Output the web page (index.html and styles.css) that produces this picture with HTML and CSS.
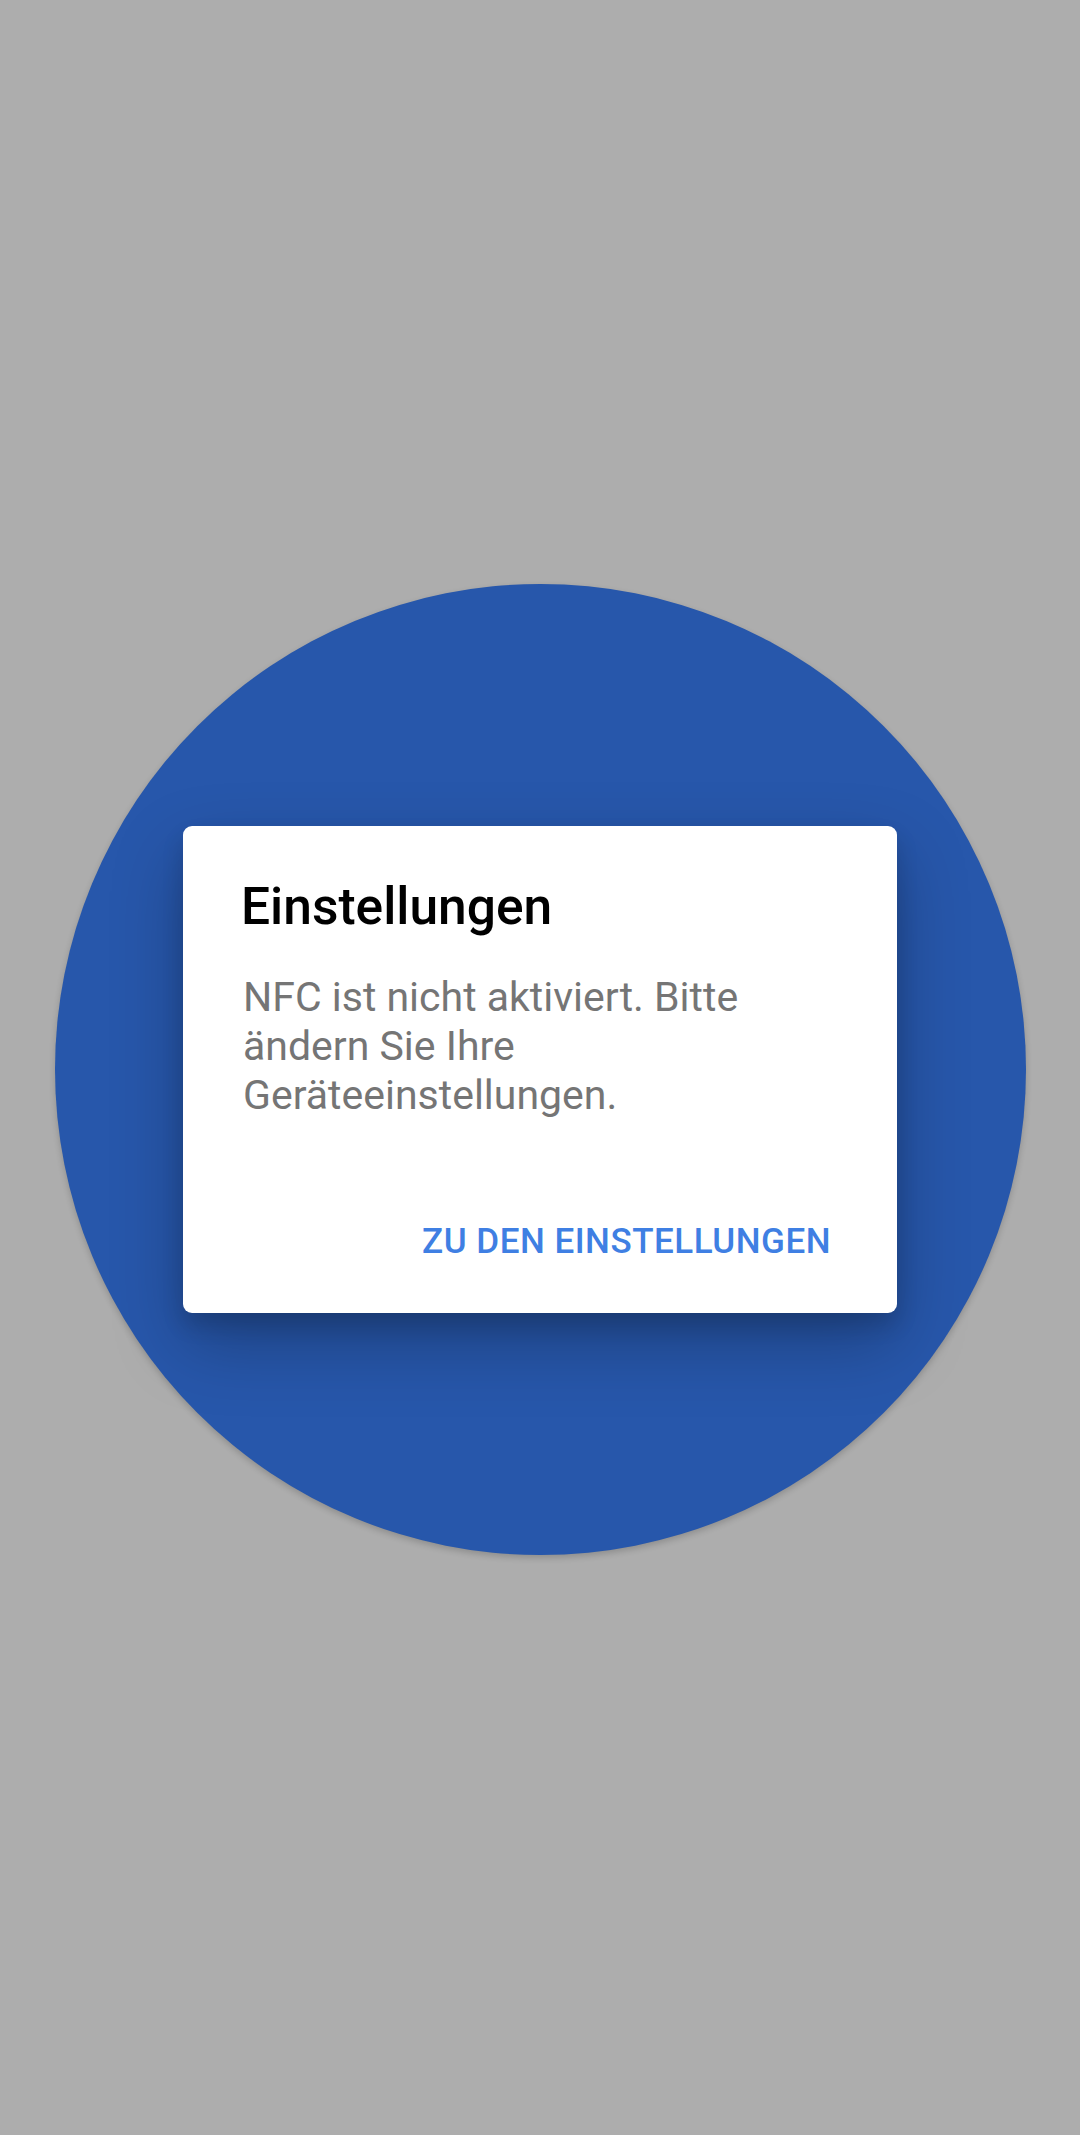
FILE: index.html
```html
<!DOCTYPE html>
<html lang="de">
<head>
<meta charset="utf-8">
<title>Einstellungen</title>
<link rel="stylesheet" href="styles.css">
</head>
<body>
<div class="screen">
  <div class="circle"></div>
  <div class="dialog">
    <h1 class="title">Einstellungen</h1>
    <p class="message">NFC ist nicht aktiviert. Bitte ändern Sie Ihre Geräteeinstellungen.</p>
    <div class="actions">
      <span class="action">ZU DEN EINSTELLUNGEN</span>
    </div>
  </div>
</div>
</body>
</html>
```
FILE: styles.css
```css
html, body {
  margin: 0;
  padding: 0;
  background: #adadad;
}
.screen {
  width: 1080px;
  height: 2135px;
  display: grid;
  place-items: center;
  padding-top: 3px;
  box-sizing: border-box;
  font-family: Roboto, "Noto Sans", sans-serif;
}
.circle, .dialog {
  grid-area: 1 / 1;
}
.circle {
  width: 971px;
  height: 971px;
  border-radius: 50%;
  background: #2757ab;
  box-shadow: 0 3px 6px rgba(0,0,0,0.18);
}
.dialog {
  width: 714px;
  height: 487px;
  box-sizing: border-box;
  background: #ffffff;
  border-radius: 9px;
  padding: 51px 66px 51px 58px;
  display: flex;
  flex-direction: column;
  box-shadow: 0 30px 70px rgba(0,0,0,0.26), 0 12px 22px rgba(0,0,0,0.14);
}
.title {
  margin: 0;
  font-size: 51.5px;
  line-height: 60px;
  font-weight: 500;
  color: #000000;
}
.message {
  margin: 36px 0 0 2px;
  font-size: 41px;
  line-height: 49px;
  font-weight: 400;
  color: #757575;
  max-width: 540px;
}
.actions {
  margin-top: auto;
  display: flex;
  justify-content: flex-end;
}
.action {
  font-size: 35px;
  line-height: 40px;
  font-weight: 500;
  color: #3f7fe3;
  letter-spacing: 0.5px;
}
```
